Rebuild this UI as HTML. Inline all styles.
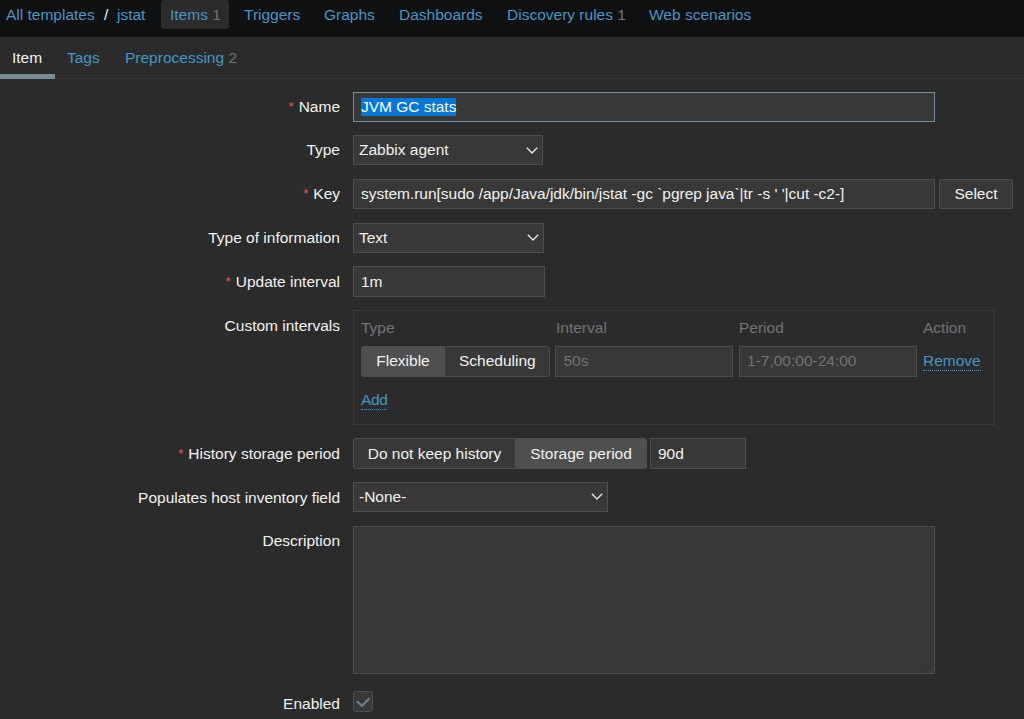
<!DOCTYPE html>
<html><head><meta charset="utf-8">
<style>
*{box-sizing:border-box;margin:0;padding:0}
html,body{width:1024px;height:719px;overflow:hidden;background:#2b2b2b;font-family:"Liberation Sans",Arial,sans-serif;font-size:15.5px;color:#f2f2f2}
.hdr{position:absolute;left:0;top:0;width:1024px;height:37px;background:#0e1012}
.hdr span{position:absolute;top:6px;line-height:18px;color:#4796c4;white-space:nowrap}
.hdr .sel{position:absolute;left:161px;top:0;width:68px;height:29px;background:#2b2b2b;border-radius:3px}
.hdr span.cnt,.tabs span.cnt{color:#737373;position:static}
.tabs{position:absolute;left:0;top:37px;width:1024px;height:42px;border-bottom:1px solid #383838}
.tabs span{position:absolute;top:12px;line-height:18px;color:#4796c4;white-space:nowrap}
.tabs .ul{position:absolute;left:0;top:37px;width:55px;height:5px;background:#768d99}
.lbl{position:absolute;right:684px;line-height:18px;white-space:nowrap;text-align:right}
.lbl i{font-style:normal;color:#e45959;font-size:13.5px;position:relative;top:-1px;margin-right:0.6px}
.inp{position:absolute;background:#383838;border:1px solid #4f4f4f;height:30px;line-height:28px;padding-left:6px;white-space:nowrap;overflow:hidden}
.ph{color:#737373}
.chev{position:absolute;right:4px;top:10px;width:12px;height:8px}
.chev path{fill:none;stroke:#e6e6e6;stroke-width:1.35}
.seg{position:absolute;height:30px;line-height:28px;border:1px solid #4f4f4f;text-align:center;background:#383838;white-space:nowrap}
.seg.on{background:#4f4f4f}
a{color:#4796c4;text-decoration:none;display:inline-block;line-height:18px;border-bottom:1px dotted #4796c4}
</style></head><body>
<div class="hdr">
<div class="sel"></div>
<span style="left:6px">All templates</span>
<span style="left:104px;color:#f2f2f2">/</span>
<span style="left:117px">jstat</span>
<span style="left:170px">Items <span class="cnt">1</span></span>
<span style="left:244px">Triggers</span>
<span style="left:324px">Graphs</span>
<span style="left:399px">Dashboards</span>
<span style="left:507px">Discovery rules <span class="cnt">1</span></span>
<span style="left:649px">Web scenarios</span>
</div>
<div class="tabs">
<span style="left:12px;color:#f2f2f2">Item</span>
<span style="left:67px">Tags</span>
<span style="left:125px">Preprocessing <span class="cnt">2</span></span>
<div class="ul"></div>
</div>

<div class="lbl" style="top:98px"><i>*</i> Name</div>
<div class="inp" style="left:353px;top:92px;width:582px;border-color:#768d99;padding-left:7px"><span style="background:#0078d7;color:#fff;letter-spacing:-0.02px;padding-bottom:1px">JVM GC stats</span></div>

<div class="lbl" style="top:141px">Type</div>
<div class="inp" style="left:353px;top:135px;width:190px;padding-left:5px">Zabbix agent<svg class="chev" style="top:11px" viewBox="0 0 12 8"><path d="M0.8 0.8L6 6l5.2-5.2"/></svg></div>

<div class="lbl" style="top:185px"><i>*</i> Key</div>
<div class="inp" style="left:353px;top:179px;width:582px;padding-left:7px;letter-spacing:-0.024px">system.run[sudo /app/Java/jdk/bin/jstat -gc `pgrep java`|tr -s ' '|cut -c2-]</div>
<div class="seg" style="left:939px;top:179px;width:74px;border-radius:2px">Select</div>

<div class="lbl" style="top:229px">Type of information</div>
<div class="inp" style="left:353px;top:223px;width:191.4px;padding-left:5px">Text<svg class="chev" viewBox="0 0 12 8"><path d="M0.8 0.8L6 6l5.2-5.2"/></svg></div>

<div class="lbl" style="top:273px"><i>*</i> Update interval</div>
<div class="inp" style="left:353px;top:266.3px;width:192px;height:30.5px;padding-left:7px;line-height:29px">1m</div>

<div class="lbl" style="top:317px">Custom intervals</div>
<div style="position:absolute;left:353px;top:310.3px;width:642px;height:114.4px;border:1px solid #383838"></div>
<div class="ph" style="position:absolute;left:361px;top:319px;line-height:18px">Type</div>
<div class="ph" style="position:absolute;left:556px;top:319px;line-height:18px">Interval</div>
<div class="ph" style="position:absolute;left:739px;top:319px;line-height:18px">Period</div>
<div class="ph" style="position:absolute;left:923px;top:319px;line-height:18px">Action</div>
<div class="seg on" style="left:361px;top:346.2px;width:84px;height:30.5px;border-radius:3px 0 0 3px">Flexible</div>
<div class="seg" style="left:444.4px;top:346.2px;width:105.8px;height:30.5px;border-radius:0 3px 3px 0">Scheduling</div>
<div class="inp ph" style="left:555.4px;top:346.2px;width:177.8px;height:30.5px;padding-left:7px">50s</div>
<div class="inp ph" style="left:739px;top:346.2px;width:178px;height:30.5px;padding-left:7px">1-7,00:00-24:00</div>
<div style="position:absolute;left:923px;top:352px;line-height:18px"><a>Remove</a></div>
<div style="position:absolute;left:361px;top:391px;line-height:18px"><a style="letter-spacing:-0.4px">Add</a></div>

<div class="lbl" style="top:444.5px"><i>*</i> History storage period</div>
<div class="seg" style="left:353px;top:438.3px;width:163px;height:30.3px;line-height:30px;border-radius:3px 0 0 3px">Do not keep history</div>
<div class="seg on" style="left:515px;top:438.3px;width:132px;height:30.3px;line-height:30px;border-radius:0 3px 3px 0">Storage period</div>
<div class="inp" style="left:650px;top:438.3px;width:96.3px;height:30.3px;line-height:30px;padding-left:7px">90d</div>

<div class="lbl" style="top:489px;letter-spacing:-0.02px">Populates host inventory field</div>
<div class="inp" style="left:353px;top:482px;width:255.4px;padding-left:5px">-None-<svg class="chev" viewBox="0 0 12 8"><path d="M0.8 0.8L6 6l5.2-5.2"/></svg></div>

<div class="lbl" style="top:532px">Description</div>
<div class="inp" style="left:353px;top:525.6px;width:582px;height:148.7px"><svg width="10" height="10" viewBox="0 0 10 10" style="position:absolute;right:0;bottom:0"><path d="M10 0L0 10h10z" fill="#333"/><path d="M2.5 10L10 2.5M5 10l5-5M7.5 10L10 7.5" stroke="#4a4a4a" stroke-width="1" fill="none"/></svg></div>

<div class="lbl" style="top:695px">Enabled</div>
<div style="position:absolute;left:353px;top:691px;width:20.4px;height:21px;background:#383838;border:1px solid #4f4f4f;border-radius:3px"><svg width="20" height="21" viewBox="0 0 20 21" style="position:absolute;left:-1px;top:-1px"><path d="M3.7 10.2l5.3 4.6 7.4-7.6" fill="none" stroke="#6c8596" stroke-width="2"/></svg></div>
</body></html>
